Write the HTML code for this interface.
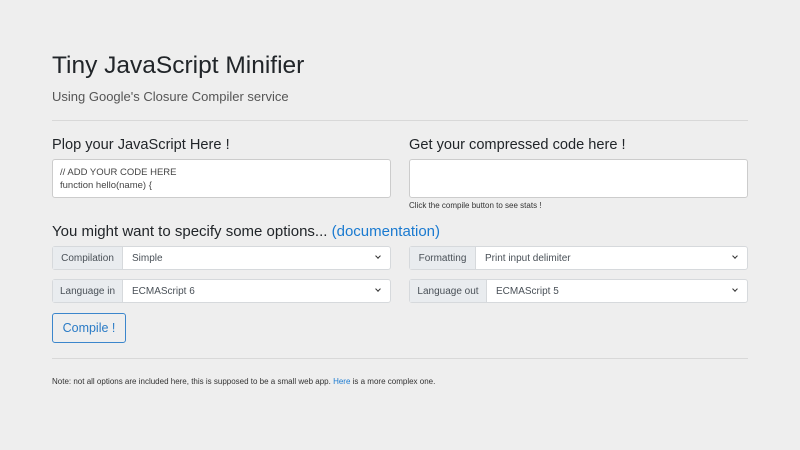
<!DOCTYPE html>
<html><head><style>
body{margin:0;width:800px;height:450px;background:#eeeeee;font-family:"Liberation Sans",sans-serif;color:#212529;position:relative;overflow:hidden}
.a{position:absolute;white-space:nowrap}
.ta{position:absolute;background:#fff;border:1px solid #ccc;border-radius:3px;box-sizing:border-box}
.grp{position:absolute;height:24px;display:flex;border:1px solid #d6d9dc;border-radius:3px;box-sizing:border-box;background:#fff;font-size:10px}
.lab{background:#e9ecef;color:#495057;display:flex;align-items:center;justify-content:center;border-right:1px solid #d6d9dc}
.sel{flex:1;display:flex;align-items:center;padding-left:9px;color:#495057;position:relative}
.sel:after{content:"";position:absolute;right:10px;top:7px;width:3px;height:3px;border-right:1.3px solid #333;border-bottom:1.3px solid #333;transform:rotate(45deg)}
hr{position:absolute;margin:0;border:0;border-top:1px solid #d8d8d8;left:52px;width:696px}
</style></head><body>
<div class="a" style="left:52px;top:52px;font-size:24.5px">Tiny JavaScript Minifier</div>
<div class="a" style="left:52px;top:89px;font-size:13px;color:#555">Using Google's Closure Compiler service</div>
<hr style="top:120px">
<div class="a" style="left:52px;top:137px;font-size:14.6px">Plop your JavaScript Here !</div>
<div class="a" style="left:409px;top:137px;font-size:14.6px">Get your compressed code here !</div>
<div class="ta" style="left:52px;top:159px;width:339px;height:39px"><div style="padding:6px 0 0 7px;font-size:9.5px;line-height:13px;color:#444">// ADD YOUR CODE HERE<br>function hello(name) {</div></div>
<div class="ta" style="left:409px;top:159px;width:339px;height:39px"></div>
<div class="a" style="left:409px;top:201px;font-size:8px;color:#333">Click the compile button to see stats !</div>
<div class="a" style="left:52px;top:223px;font-size:15px">You might want to specify some options... <span style="color:#1a7ad0">(documentation)</span></div>
<div class="grp" style="left:52px;top:246px;width:339px"><div class="lab" style="width:69px">Compilation</div><div class="sel">Simple</div></div>
<div class="grp" style="left:409px;top:246px;width:339px"><div class="lab" style="width:65px">Formatting</div><div class="sel">Print input delimiter</div></div>
<div class="grp" style="left:52px;top:279px;width:339px"><div class="lab" style="width:69px">Language in</div><div class="sel">ECMAScript 6</div></div>
<div class="grp" style="left:409px;top:279px;width:339px"><div class="lab" style="width:76px">Language out</div><div class="sel">ECMAScript 5</div></div>
<div class="a" style="left:52px;top:313px;width:74px;height:30px;box-sizing:border-box;border:1px solid #3b86cc;border-radius:3px;color:#2a7bc6;font-size:12.5px;display:flex;align-items:center;justify-content:center">Compile !</div>
<hr style="top:358px">
<div class="a" style="left:52px;top:377px;font-size:8px;color:#333">Note: not all options are included here, this is supposed to be a small web app. <span style="color:#1a7ad0">Here</span> is a more complex one.</div>
</body></html>
